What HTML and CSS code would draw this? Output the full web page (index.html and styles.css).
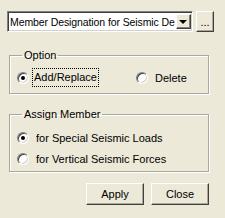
FILE: index.html
```html
<!DOCTYPE html>
<html lang="en">
<head>
    <meta charset="UTF-8">
    <title>Member Designation</title>
    <link rel="stylesheet" href="styles.css">
</head>
<body>
    <div class="dialog">
        <div class="top-row">
            <div class="combo">
                <span class="combo-text">Member Designation for Seismic De</span>
                <span class="combo-btn"><span class="arrow"></span></span>
            </div>
            <button class="btn more">...</button>
        </div>

        <fieldset class="group option-group">
            <legend>Option</legend>
            <div class="option-row">
                <label class="radio-item first">
                    <span class="radio checked"></span>
                    <span class="focus">Add/Replace</span>
                </label>
                <label class="radio-item">
                    <span class="radio"></span>
                    <span class="plain">Delete</span>
                </label>
            </div>
        </fieldset>

        <fieldset class="group assign-group">
            <legend>Assign Member</legend>
            <label class="radio-item">
                <span class="radio checked"></span>
                <span class="plain">for Special Seismic Loads</span>
            </label>
            <label class="radio-item">
                <span class="radio"></span>
                <span class="plain">for Vertical Seismic Forces</span>
            </label>
        </fieldset>

        <div class="actions">
            <button class="btn action">Apply</button>
            <button class="btn action">Close</button>
        </div>
    </div>
</body>
</html>
```

FILE: styles.css
```css
body {
    margin: 0;
    background: #ece9d8;
    font-family: "Liberation Sans", Arial, sans-serif;
    font-size: 11px;
    color: #000;
}

.dialog {
    width: 206px;
    padding: 11px 0 0 7px;
}

.top-row {
    display: flex;
    gap: 3px;
    height: 21px;
}

.combo {
    box-sizing: border-box;
    flex-shrink: 0;
    width: 186px;
    height: 21px;
    display: flex;
    align-items: center;
    background: #fff;
    border: 1px solid;
    border-color: #808080 #fff #fff #808080;
    box-shadow: inset 1px 1px 0 #404040, inset -1px -1px 0 #d4d0c8;
    padding: 2px 1px 2px 2px;
}

.combo-text {
    flex: 1;
    min-width: 0;
    white-space: nowrap;
    font-size: 10.5px;
    letter-spacing: -0.1px;
}

.combo-btn {
    box-sizing: border-box;
    flex-shrink: 0;
    width: 15px;
    height: 15px;
    background: #ece9d8;
    border: 1px solid;
    border-color: #fff #404040 #404040 #fff;
    box-shadow: inset -1px -1px 0 #808080;
    display: flex;
    align-items: center;
    justify-content: center;
}

.arrow {
    width: 0;
    height: 0;
    border-left: 4px solid transparent;
    border-right: 4px solid transparent;
    border-top: 4px solid #000;
    margin: 1px 1px 0 0;
}

.btn {
    box-sizing: border-box;
    background: #ece9d8;
    border: 1px solid;
    border-color: #fff #404040 #404040 #fff;
    box-shadow: inset -1px -1px 0 #aca899;
    font-family: inherit;
    font-size: 11px;
    color: #000;
    padding: 0;
}

.more {
    flex-shrink: 0;
    width: 18px;
    height: 21px;
    line-height: 13px;
    padding-top: 2px;
}

.group {
    margin: 0 4px 0 2px;
    border: 1px solid #aca899;
    box-shadow: 1px 1px 0 #fff, inset 1px 1px 0 #fff;
    padding: 0 6px 0 7px;
}

.group legend {
    padding: 0 2px;
    margin-left: 5px;
    line-height: 13px;
}

.option-group {
    margin-top: 17px;
    padding-top: 7px;
    padding-bottom: 7px;
}

.option-row {
    display: flex;
}

.radio-item {
    display: flex;
    align-items: center;
    height: 17px;
}

.radio-item.first {
    width: 119px;
}

.assign-group {
    margin-top: 14px;
    padding-top: 8px;
    padding-bottom: 4px;
}

.assign-group .radio-item + .radio-item {
    margin-top: 4px;
}

.radio {
    box-sizing: border-box;
    width: 12px;
    height: 12px;
    border-radius: 50%;
    border: 1px solid;
    border-color: #808080 #fff #fff #808080;
    box-shadow: inset 1px 1px 0 #404040, inset -1px -1px 0 #d4d0c8;
    background: #fff;
    display: flex;
    align-items: center;
    justify-content: center;
    margin-right: 4px;
}

.radio.checked::after {
    content: "";
    width: 4px;
    height: 4px;
    border-radius: 50%;
    background: #000;
}

.focus {
    outline: 1px dotted #000;
    padding: 2px 1px;
    line-height: 13px;
}

.plain {
    padding: 0 1px;
    margin-left: 2px;
}

.actions {
    display: flex;
    justify-content: flex-end;
    gap: 7px;
    margin-top: 11px;
    padding-right: 4px;
}

.action {
    width: 58px;
    height: 22px;
}
```
